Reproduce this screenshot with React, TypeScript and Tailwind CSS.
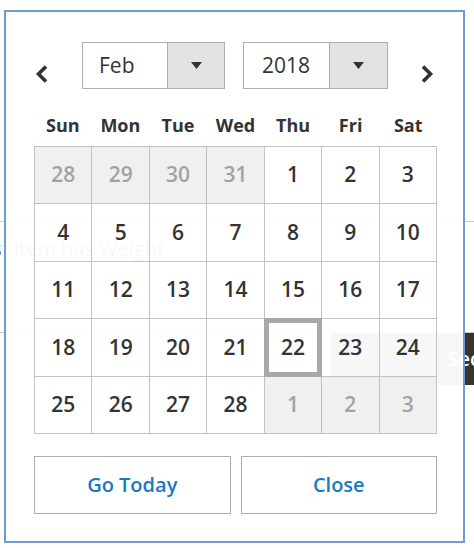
import React from "react";

type Day = { n: number; muted?: boolean; today?: boolean };

const weekdays = ["Sun", "Mon", "Tue", "Wed", "Thu", "Fri", "Sat"];

const days: Day[] = [
  { n: 28, muted: true }, { n: 29, muted: true }, { n: 30, muted: true }, { n: 31, muted: true },
  { n: 1 }, { n: 2 }, { n: 3 },
  { n: 4 }, { n: 5 }, { n: 6 }, { n: 7 }, { n: 8 }, { n: 9 }, { n: 10 },
  { n: 11 }, { n: 12 }, { n: 13 }, { n: 14 }, { n: 15 }, { n: 16 }, { n: 17 },
  { n: 18 }, { n: 19 }, { n: 20 }, { n: 21 }, { n: 22, today: true }, { n: 23 }, { n: 24 },
  { n: 25 }, { n: 26 }, { n: 27 }, { n: 28 },
  { n: 1, muted: true }, { n: 2, muted: true }, { n: 3, muted: true },
];

function Caret() {
  return (
    <svg width="11" height="7" viewBox="0 0 11 7">
      <polygon points="0,0 11,0 5.5,7" fill="#333" />
    </svg>
  );
}

function Chevron({ dir }: { dir: "prev" | "next" }) {
  const d = dir === "prev" ? "M11 1.5 L3.5 9 L11 16.5" : "M2 1.5 L9.5 9 L2 16.5";
  return (
    <svg width="13" height="18" viewBox="0 0 13 18">
      <path d={d} fill="none" stroke="#333" strokeWidth="3.6" strokeLinejoin="miter" />
    </svg>
  );
}

function Picker({ value, boxClass, textClass, btnClass }: { value: string; boxClass: string; textClass: string; btnClass: string }) {
  return (
    <div className={`flex h-[47px] border border-[#adadad] ${boxClass}`}>
      <div className={`flex-1 flex items-center text-[21px] text-[#333] ${textClass}`}>{value}</div>
      <div className={`flex items-center justify-center bg-[#e3e3e3] border-l border-[#adadad] ${btnClass}`}>
        <Caret />
      </div>
    </div>
  );
}

export default function App() {
  return (
    <div className="relative w-[474px] h-[548px] overflow-hidden bg-white font-['Open_Sans',sans-serif]">
      {/* page underneath the date picker */}
      <div className="h-[222px] border-b border-[#c8c8c8]" />
      <div className="h-[111px] border-b border-[#c8c8c8] pt-[12px] flex items-start">
        <span className="text-[20px] text-[#303030] ml-[-8px] whitespace-nowrap">s</span>
        <span className="text-[20px] text-[#303030] ml-[12px] whitespace-nowrap">Item has Weight</span>
      </div>
      <div className="flex justify-end">
        <div className="w-[144px] h-[52px] bg-[#373330] flex items-center justify-end overflow-hidden">
          <span className="text-[20px] font-semibold text-white whitespace-nowrap mr-[-6px]">Sec</span>
        </div>
      </div>

      {/* date picker */}
      <div className="absolute left-[4px] top-[10px] w-[461px] h-[533px] border-2 border-[#6e9ad6] bg-white/[0.965]">
        <div className="flex items-start pl-[29px] pt-[30px]">
          <div className="mt-[23px]">
            <Chevron dir="prev" />
          </div>
          <Picker value="Feb" boxClass="ml-[34px] w-[143px]" textClass="pl-[16px]" btnClass="w-[57px]" />
          <Picker value="2018" boxClass="ml-[18px] w-[145px]" textClass="pl-[18px]" btnClass="w-[58px]" />
          <div className="mt-[23px] ml-[33px]">
            <Chevron dir="next" />
          </div>
        </div>

        <div className="pl-[28px]">
          <div className="w-[403px] grid grid-cols-7 mt-[18px] h-[36px] items-center">
            {weekdays.map((w) => (
              <div key={w} className="text-center text-[18px] font-bold text-[#333]">
                {w}
              </div>
            ))}
          </div>

          <div className="w-[403px] mt-[3px] grid grid-cols-7 border-l border-t border-[#c2c2c2]">
            {days.map((d, i) => (
              <div
                key={i}
                className={`relative h-[57.4px] flex items-center justify-center border-r border-b border-[#c2c2c2] text-[21px] font-semibold ${
                  d.muted ? "bg-[#f0f0f0] text-[#a3a3a3]" : "text-[#333]"
                }`}
              >
                {d.n}
                {d.today && <div className="absolute -inset-px border-[5px] border-[#a8a8a8]" />}
              </div>
            ))}
          </div>

          <div className="w-[403px] mt-[22px] flex gap-[10px]">
            <button className="flex-1 h-[58px] border border-[#adadad] bg-white text-[20px] font-semibold text-[#1979c3]">
              Go Today
            </button>
            <button className="flex-1 h-[58px] border border-[#adadad] bg-white text-[20px] font-semibold text-[#1979c3]">
              Close
            </button>
          </div>
        </div>
      </div>
    </div>
  );
}
